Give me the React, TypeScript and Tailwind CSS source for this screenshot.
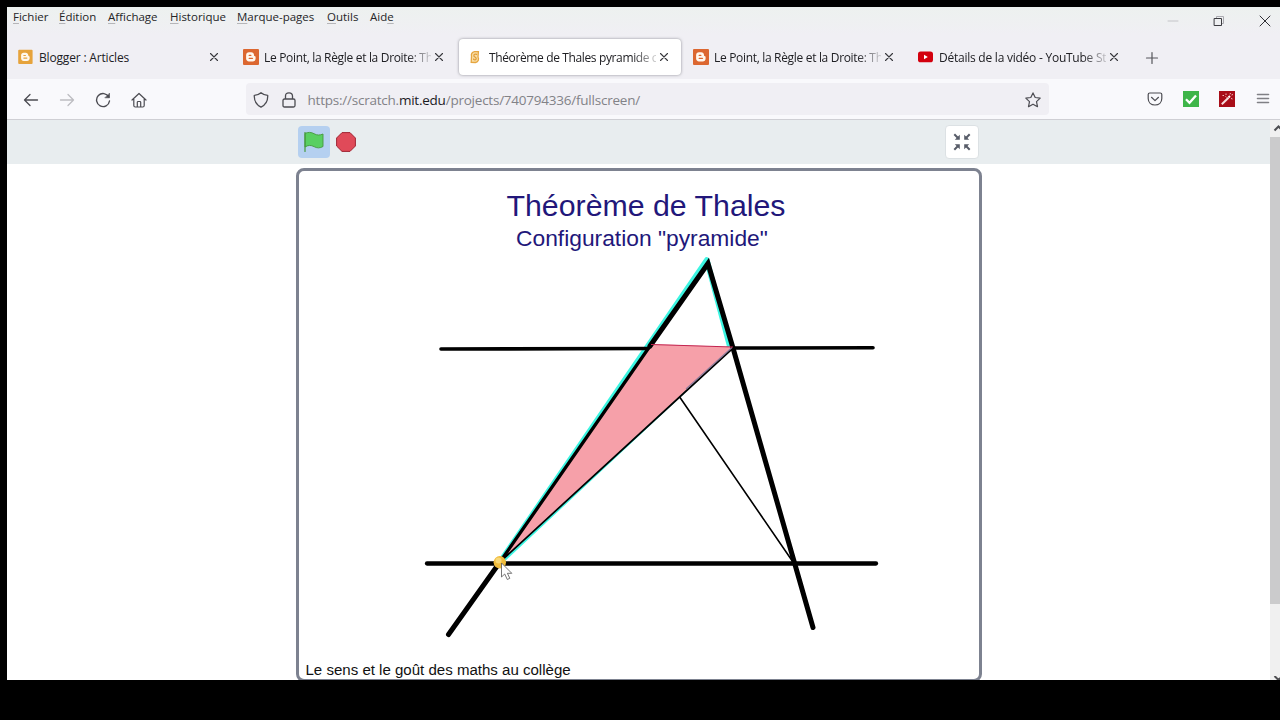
import type { ReactNode } from "react";

type TabIcon = "blogger-old" | "blogger" | "scratch" | "youtube";

const tabs: { icon: TabIcon; title: string; active?: boolean; label: string }[] = [
  { icon: "blogger-old", title: "Blogger : Articles", label: "tracking-[-0.17px]" },
  {
    icon: "blogger",
    title: "Le Point, la Règle et la Droite: Th",
    label: "tracking-[-0.32px] [mask-image:linear-gradient(to_right,#000_148px,transparent_176px)]",
  },
  {
    icon: "scratch",
    title: "Théorème de Thales pyramide c",
    active: true,
    label: "tracking-[-0.37px] [mask-image:linear-gradient(to_right,#000_148px,transparent_178px)]",
  },
  {
    icon: "blogger",
    title: "Le Point, la Règle et la Droite: Th",
    label: "tracking-[-0.32px] [mask-image:linear-gradient(to_right,#000_148px,transparent_176px)]",
  },
  {
    icon: "youtube",
    title: "Détails de la vidéo - YouTube St",
    label: "tracking-[-0.24px] [mask-image:linear-gradient(to_right,#000_148px,transparent_178px)]",
  },
];

const menus = [
  { before: "", key: "F", after: "ichier", w: "w-[46px]" },
  { before: "", key: "É", after: "dition", w: "w-[49px]" },
  { before: "", key: "A", after: "ffichage", w: "w-[62px]" },
  { before: "", key: "H", after: "istorique", w: "w-[67px]" },
  { before: "", key: "M", after: "arque-pages", w: "w-[90px]" },
  { before: "", key: "O", after: "utils", w: "w-[43px]" },
  { before: "Aid", key: "e", after: "", w: "w-[40px]" },
];

function Favicon({ icon }: { icon: TabIcon }) {
  if (icon === "youtube")
    return (
      <svg className="h-4 w-4 shrink-0" viewBox="0 0 16 16">
        <rect x="0" y="2.500" width="15" height="10.800" rx="2.600" fill="#d3000e" />
        <path d="M6 5.700v4.600l3.800-2.300z" fill="#fff" />
      </svg>
    );
  if (icon === "scratch")
    return (
      <svg className="h-4 w-4 shrink-0" viewBox="0 0 16 16" fill="none">
        <path d="M6.500 2.600C3.800 3.200 3 5.300 3.500 7.300L3.200 13.300 7.500 13.500C10.700 13 11 9.800 10 8L10.400 2.600 6.500 2.600Z" fill="#f8dda6" stroke="#e6a63f" strokeWidth="1.300" />
        <path d="M8.500 5.900V5.200C7.200 4.800 5.700 5.400 5.900 6.800 6.100 8.200 8.200 8 8.200 9.600 8.100 11.100 6.400 11.100 5.600 10.400V9.600" stroke="#e09c35" strokeWidth="1.200" />
      </svg>
    );
  return (
    <svg className="h-4 w-4 shrink-0" viewBox="0 0 16 16">
      {icon === "blogger" ? (
        <rect width="16" height="16" rx="1" fill="#dc6730" />
      ) : (
        <rect x="0.200" y="0.700" width="14.400" height="14.400" rx="1" fill="#e6a33c" />
      )}
      <path
        fillRule="evenodd"
        transform={icon === "blogger" ? undefined : "translate(0.300 0.700) scale(0.900)"}
        d="M6 3.300h2.200c1.700 0 2.800 1.200 2.800 2.700 0 .9.400 1.100 1 1.200.4.100.6.300.6.800v1.500c0 1.700-1.200 3-2.900 3H6c-1.700 0-2.900-1.200-2.900-2.900V6.200c0-1.700 1.200-2.900 2.900-2.900Zm.2 2.500c-.9 0-.9 1.200 0 1.200h1.700c.9 0 .9-1.200 0-1.200Zm0 3c-.9 0-.9 1.200 0 1.200h3.300c.9 0 .9-1.200 0-1.200Z"
        fill="#fff8ee"
      />
    </svg>
  );
}

function Line({ children, className }: { children: ReactNode; className: string }) {
  return (
    <svg className={"shrink-0 " + className} viewBox="0 0 16 16" fill="none" strokeLinecap="round" strokeLinejoin="round">
      {children}
    </svg>
  );
}

function MenuBar() {
  return (
    <div className="flex h-7 bg-linear-to-b from-[#edf1ef] to-[#f0eff4] pl-[6px]">
      <div className="flex grow pt-[2px] text-[11.500px] leading-4 text-[#252527]">
        {menus.map((m) => (
          <span key={m.key} className={"whitespace-nowrap " + m.w}>
            {m.before}
            <span className="underline decoration-[#b5b5b8] decoration-1 underline-offset-2">{m.key}</span>
            {m.after}
          </span>
        ))}
      </div>
      <div className="flex items-center gap-[30px] pr-[7px]">
        <Line className="h-4 w-4 text-[#c4c4c8]">
          <path d="M3 8H13" stroke="currentColor" />
        </Line>
        <Line className="h-4 w-4 text-[#3b3b40]">
          <path d="M5.500 5V3.500H12.500V10.500H11" stroke="#aaaab0" />
          <path d="M3.500 5.500H10.500V12.500H3.500Z" stroke="currentColor" />
        </Line>
        <Line className="h-4 w-4 text-[#303036]">
          <path d="M3 3L13 13M13 3L3 13" stroke="currentColor" />
        </Line>
      </div>
    </div>
  );
}

function TabStrip() {
  return (
    <div className="flex h-11 items-center bg-[#f0eff4] pl-px">
      {tabs.map((t, i) => (
        <div
          key={i}
          className={
            "flex h-[36px] shrink-0 items-center " +
            (t.active
              ? "mr-[2px] ml-px w-[222px] rounded-[4px] bg-white pl-[9px] shadow-[0_0_3px_rgba(90,90,100,0.65)]"
              : "w-[225px] pl-[10px]")
          }
        >
          <Favicon icon={t.icon} />
          <span className={"w-[172px] pt-px pl-[5px] text-[12px] leading-5 whitespace-nowrap text-[#202024] " + t.label}>{t.title}</span>
          <Line className="h-4 w-4 text-[#37373c]">
            <path d="M4.500 4.500L11.500 11.500M11.500 4.500L4.500 11.500" stroke="currentColor" strokeWidth="1.100" />
          </Line>
        </div>
      ))}
      <Line className="mt-px ml-[11px] h-4 w-4 text-[#55555a]">
        <path d="M8 2.500V13.500M2.500 8H13.500" stroke="currentColor" strokeWidth="1.200" />
      </Line>
    </div>
  );
}

function NavBar() {
  return (
    <div className="flex h-[41px] items-center border-b border-[#cfcfd4] bg-[#f9f9fc] pl-4">
      <div className="flex w-[223px] gap-5 pt-[2px]">
        <Line className="h-4 w-4 text-[#4c4c52]">
          <path d="M14.500 8H1.500M7 2.500L1.500 8 7 13.500" stroke="currentColor" strokeWidth="1.300" />
        </Line>
        <Line className="h-4 w-4 text-[#bdbdc1]">
          <path d="M1.500 8H14.500M9 2.500L14.500 8 9 13.500" stroke="currentColor" strokeWidth="1.300" />
        </Line>
        <Line className="h-4 w-4 text-[#4c4c52]">
          <path d="M13.800 5A6.500 6.500 0 1 0 14.500 9" stroke="currentColor" strokeWidth="1.400" />
          <path d="M14.500 1.500V5.800H10.200Z" fill="currentColor" stroke="currentColor" strokeWidth=".6" />
        </Line>
        <Line className="h-4 w-4 text-[#4c4c52]">
          <path d="M1 8L8 1.500 15 8M2.800 7V13.500Q2.800 15 4.300 15H11.700Q13.200 15 13.200 13.500V7M6.300 15V10.300Q6.300 9.500 7.100 9.500H8.900Q9.700 9.500 9.700 10.300V15" stroke="currentColor" strokeWidth="1.200" />
        </Line>
      </div>
      <div className="flex h-8 w-[803px] items-center rounded-[4px] bg-[#f0eff4] pt-[2px] pl-[7px]">
        <Line className="-mt-px h-4 w-4 text-[#4c4c52]">
          <path d="M8 .8C6 2.600 3.600 3.300 1.300 3.300 1 8.500 3 12.700 8 15.200 13 12.700 15 8.500 14.700 3.300 12.400 3.300 10 2.600 8 .8Z" stroke="currentColor" strokeWidth="1.300" />
        </Line>
        <Line className="-mt-px ml-3 h-4 w-4 text-[#4c4c52]">
          <path d="M3.500 7H12.500Q14 7 14 8.500V13.500Q14 15 12.500 15H3.500Q2 15 2 13.500V8.500Q2 7 3.500 7ZM4.500 7V4Q4.500 .8 8 .8T11.500 4V7" stroke="currentColor" strokeWidth="1.300" />
        </Line>
        <span className="ml-[10.500px] grow text-[13.500px] leading-5 tracking-[-0.230px] whitespace-nowrap text-[#828287]">
          https://scratch.<span className="text-[#1b1b1f]">mit.edu</span>/projects/740794336/fullscreen/
        </span>
        <Line className="mr-2 h-4 w-4 text-[#4c4c52]">
          <path d="M8 .9L10.200 5.500 15.200 6.100 11.500 9.600 12.500 14.700 8 12.200 3.500 14.700 4.500 9.600.8 6.100 5.800 5.500Z" stroke="currentColor" strokeWidth="1.200" />
        </Line>
      </div>
      <div className="ml-[98px] flex gap-5">
        <Line className="h-4 w-4 text-[#4c4c52]">
          <path d="M2.800 2H13.200Q14.800 2 14.800 3.600V7.500C14.800 11.500 11.800 14 8 14S1.200 11.500 1.200 7.500V3.600Q1.200 2 2.800 2ZM4.500 6.300L8 9.600 11.500 6.300" stroke="currentColor" strokeWidth="1.200" />
        </Line>
        <svg className="h-4 w-4" viewBox="0 0 16 16" fill="none">
          <rect width="16" height="16" fill="#3eb549" />
          <path d="M3 8.300L6.500 11.800 13 4.500" stroke="#fff" strokeWidth="2.300" />
        </svg>
        <svg className="h-4 w-4" viewBox="0 0 16 16" fill="none">
          <rect width="16" height="16" fill="#a80d18" />
          <path d="M2.800 13.200L9.500 6.800" stroke="#f7dede" strokeWidth="2" />
          <path d="M9.500 6.500L11 5" stroke="#fff" strokeWidth="2" />
          <path d="M3.500 4.500H5M7 2.500V4M11.500 2L11 3.300M12.500 4L14 3.500M12 7.500L13.500 8M6.500 5.500L7.500 6.300" stroke="#f0bcbc" />
        </svg>
        <Line className="h-4 w-4 text-[#808085]">
          <path d="M2.500 3.500H13.500M2.500 7.500H13.500M2.500 11.500H13.500" stroke="currentColor" strokeWidth="1.600" />
        </Line>
      </div>
    </div>
  );
}

function StageDrawing() {
  return (
    <svg className="block h-[508px] w-[680px]" viewBox="299 171 680 508" fill="none" fontFamily="'Liberation Sans', Arial, sans-serif">
      <defs>
        <filter id="glow" x="-5%" y="-5%" width="110%" height="110%">
          <feGaussianBlur stdDeviation="0.5" />
        </filter>
      </defs>
      <text x="506.500" y="216" fontSize="30.300" fill="#22177a">Théorème de Thales</text>
      <text x="516" y="246" fontSize="22.800" fill="#22177a">Configuration "pyramide"</text>
      <text x="305.500" y="675" fontSize="15.050" fill="#111">Le sens et le goût des maths au collège</text>
      <path d="M500 562L706.800 260L730 347Z" stroke="#3df5e2" strokeWidth="5.600" strokeLinejoin="round" filter="url(#glow)" />
      <path d="M651 344L733 347L501 561Z" fill="#f6a0a9" />
      <g stroke="#000" strokeLinecap="round">
        <path d="M441 349L648 348.500M733 348L873 347.700" strokeWidth="3.600" />
        <path d="M427 563.500H876" strokeWidth="4.300" />
        <path d="M448.500 634.500L500 562" strokeWidth="5" />
        <path d="M500 562L650 346" strokeWidth="3.300" />
        <path d="M650 346L708 263.500L733 348L813 627.500" strokeWidth="5" strokeLinejoin="miter" />
        <path d="M501 561L733 348" strokeWidth="1.700" />
        <path d="M680 397.500L793 562" strokeWidth="1.600" />
      </g>
      <path d="M686 389L732 347.500" stroke="#8c7a9a" strokeWidth="1.200" />
      <path d="M651 344.500L733 347" stroke="#c22550" strokeWidth="1.200" />
      <circle cx="499.800" cy="562.300" r="6.200" fill="#f0bc3c" />
      <circle cx="498.500" cy="560.500" r="3" fill="#f8d878" />
      <path d="M501.500 563V577L504.700 574 507.300 579.500 509.800 578.300 507.400 573.300H511.800Z" fill="#fff" stroke="#555" strokeWidth=".8" />
    </svg>
  );
}

function Player() {
  return (
    <div className="flex h-[560px] overflow-hidden bg-white">
      <div className="w-[1263px]">
        <div className="flex h-11 items-center bg-[#e8edef] pl-[291px]">
          <span className="flex h-8 w-8 items-center justify-center rounded-[4px] bg-[#b5d0f0]">
            <svg className="h-[22px] w-[22px]" viewBox="0 0 22 22" fill="none">
              <path d="M2 2.500C5 .8 8.500 1.200 11 2.700 14 4.500 17 4.300 20 3V15.500C17 17.300 14 17.300 11 15.600 8 14 5 14 2 16Z" fill="#59cf62" stroke="#45993d" strokeWidth=".9" />
              <path d="M2 1.500V20.500" stroke="#45993d" strokeWidth="1.200" strokeLinecap="round" />
            </svg>
          </span>
          <svg className="ml-[6px] h-5 w-5" viewBox="0 0 20 20">
            <path d="M6 .6H14L19.400 6V14L14 19.400H6L.6 14V6Z" fill="#e04a59" stroke="#9f2634" />
          </svg>
          <span className="ml-[589px] flex h-[34px] w-[34px] items-center justify-center rounded-[4px] border border-[#dce1e4] bg-white">
            <svg className="h-[18px] w-[18px]" viewBox="0 0 18 18" fill="none" stroke="#575c68" strokeWidth="2">
              <path d="M1.300 1.300L5 5M16.700 1.300L13 5M1.300 16.700L5 13M16.700 16.700L13 13" />
              <path d="M1.800 6.800H6.800V1.800ZM16.200 6.800H11.200V1.800ZM1.800 11.200H6.800V16.200ZM16.200 11.200H11.200V16.200Z" fill="#575c68" stroke="none" />
            </svg>
          </span>
        </div>
        <div className="mt-1 ml-[289px] w-[686px] overflow-hidden rounded-[8px] border-3 border-[#7d8290] bg-white">
          <StageDrawing />
        </div>
      </div>
      <div className="flex w-[10px] flex-col overflow-hidden bg-[#f0f0f0]">
        <svg className="h-[17px] w-[10px] shrink-0" viewBox="0 0 10 17" fill="none">
          <path d="M4.500 10.500L8.500 6.500L12.500 10.500" stroke="#4e4e52" strokeWidth="2" />
        </svg>
        <div className="h-[467px] shrink-0 bg-[#cbcbcc]" />
        <svg className="mt-auto h-[4px] w-[10px] shrink-0" viewBox="0 0 10 4" fill="none">
          <path d="M4.500 0L8.500 4L12.500 0" stroke="#4e4e52" strokeWidth="2" />
        </svg>
      </div>
    </div>
  );
}

export default function App() {
  return (
    <div className="h-[720px] w-[1280px] overflow-hidden bg-black pt-[7px] pl-[7px] font-['Open_Sans','Noto_Sans',sans-serif]">
      <MenuBar />
      <TabStrip />
      <NavBar />
      <Player />
    </div>
  );
}
